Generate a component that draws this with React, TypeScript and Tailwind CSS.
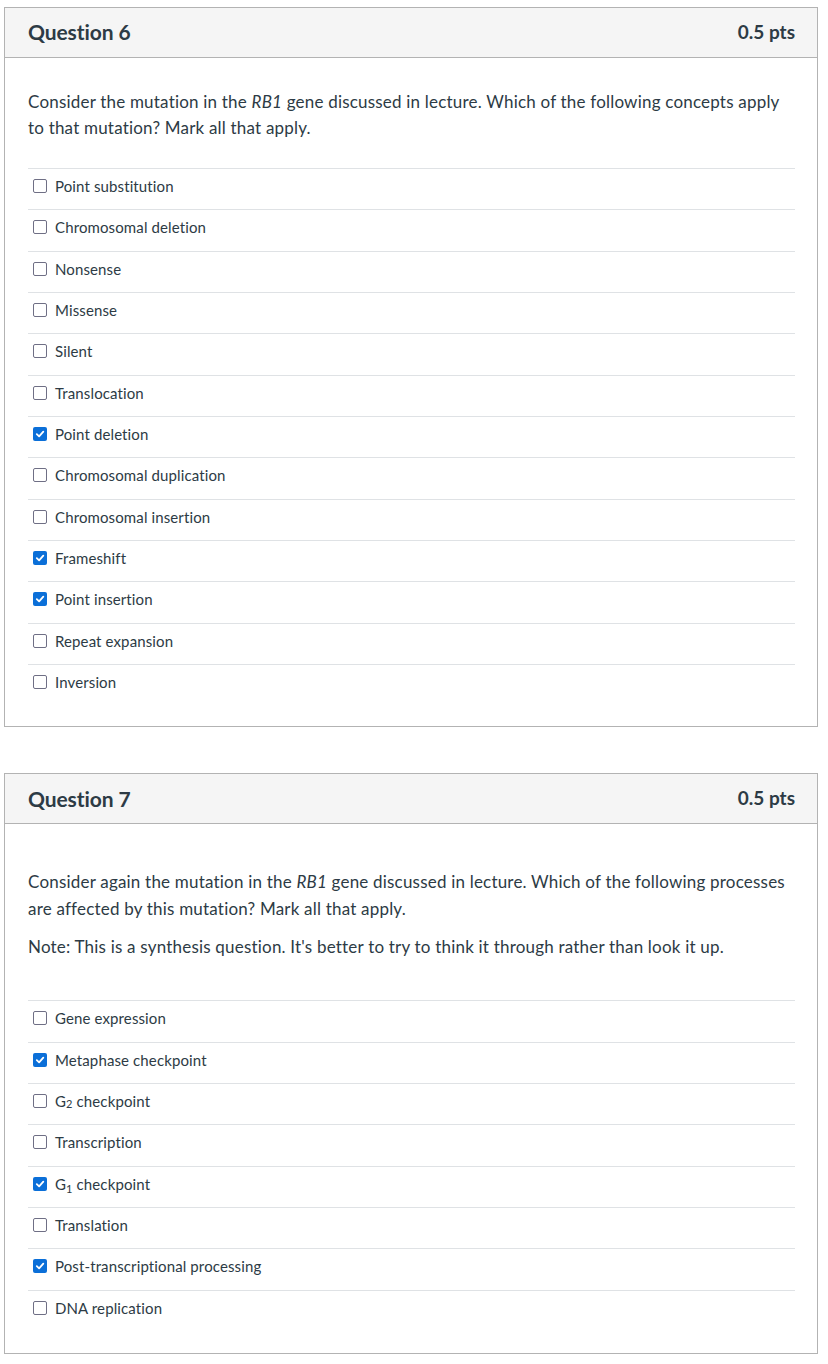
import React from "react";

type Opt = { label: React.ReactNode; checked?: boolean };

const q6: Opt[] = [
  { label: "Point substitution" },
  { label: "Chromosomal deletion" },
  { label: "Nonsense" },
  { label: "Missense" },
  { label: "Silent" },
  { label: "Translocation" },
  { label: "Point deletion", checked: true },
  { label: "Chromosomal duplication" },
  { label: "Chromosomal insertion" },
  { label: "Frameshift", checked: true },
  { label: "Point insertion", checked: true },
  { label: "Repeat expansion" },
  { label: "Inversion" },
];

const q7: Opt[] = [
  { label: "Gene expression" },
  { label: "Metaphase checkpoint", checked: true },
  {
    label: (
      <>
        G<sub className="text-[11px] relative top-[1px] align-baseline">2</sub> checkpoint
      </>
    ),
  },
  { label: "Transcription" },
  {
    label: (
      <>
        G<sub className="text-[11px] relative top-[3px] align-baseline">1</sub> checkpoint
      </>
    ),
    checked: true,
  },
  { label: "Translation" },
  { label: "Post-transcriptional processing", checked: true },
  { label: "DNA replication" },
];

function Box({ checked }: { checked?: boolean }) {
  if (checked) {
    return (
      <span className="w-[14px] h-[14px] rounded-[2px] bg-[#0b6fd8] flex items-center justify-center shrink-0">
        <svg width="10" height="10" viewBox="0 0 10 10">
          <path d="M1.8 5.2 L4.1 7.4 L8.3 2.6" fill="none" stroke="white" strokeWidth="1.8" strokeLinecap="round" strokeLinejoin="round" />
        </svg>
      </span>
    );
  }
  return <span className="w-[14px] h-[14px] rounded-[2px] border-[1.5px] border-[#6f6f85] bg-white shrink-0" />;
}

function Row({ opt }: { opt: Opt }) {
  return (
    <div className="h-[41.33px] border-t border-[#dfe2e5] flex items-center pb-[6px] pl-[5px] gap-[8px]">
      <Box checked={opt.checked} />
      <span className="text-[15px] tracking-[0.12px] leading-[18px] text-[#2d3b45]">{opt.label}</span>
    </div>
  );
}

function Header({ title }: { title: string }) {
  return (
    <div className="h-[50px] bg-[#f5f5f5] border-b border-[#b3b3b3] flex items-center justify-between pl-[23px] pr-[22px]">
      <span className="text-[21px] font-bold text-[#2d3b45] tracking-[-0.1px] -mt-[1px]">{title}</span>
      <span className="text-[19px] font-bold text-[#2d3b45] -mt-[1px]">0.5 pts</span>
    </div>
  );
}

export default function App() {
  return (
    <div className="bg-white min-h-[1364px] pt-[7px] pl-[4px] w-[828px]" style={{ fontFamily: "Lato, 'Noto Sans', sans-serif" }}>
      <div className="w-[814px] border border-[#b3b3b3]">
        <Header title="Question 6" />
        <div className="pl-[23px] pr-[22px] pt-[31px] pb-[21px]">
          <div className="text-[17px] tracking-[0.2px] leading-[26px] text-[#2d3b45]">
            Consider the mutation in the <i>RB1</i> gene discussed in lecture. Which of the following concepts apply to that mutation? Mark all that apply.
          </div>
          <div className="mt-[27px]">
            {q6.map((o, i) => (
              <Row key={i} opt={o} />
            ))}
          </div>
        </div>
      </div>

      <div className="w-[814px] border border-[#b3b3b3] mt-[46px]">
        <Header title="Question 7" />
        <div className="pl-[23px] pr-[22px] pt-[44px] pb-[22px]">
          <div className="text-[17px] tracking-[0.2px] leading-[27px] text-[#2d3b45]">
            <p>
              Consider again the mutation in the <i>RB1</i> gene discussed in lecture. Which of the following processes are affected by this mutation? Mark all that apply.
            </p>
            <p className="mt-[11px]">
              Note: This is a synthesis question. It's better to try to think it through rather than look it up.
            </p>
          </div>
          <div className="mt-[40px]">
            {q7.map((o, i) => (
              <Row key={i} opt={o} />
            ))}
          </div>
        </div>
      </div>
    </div>
  );
}
